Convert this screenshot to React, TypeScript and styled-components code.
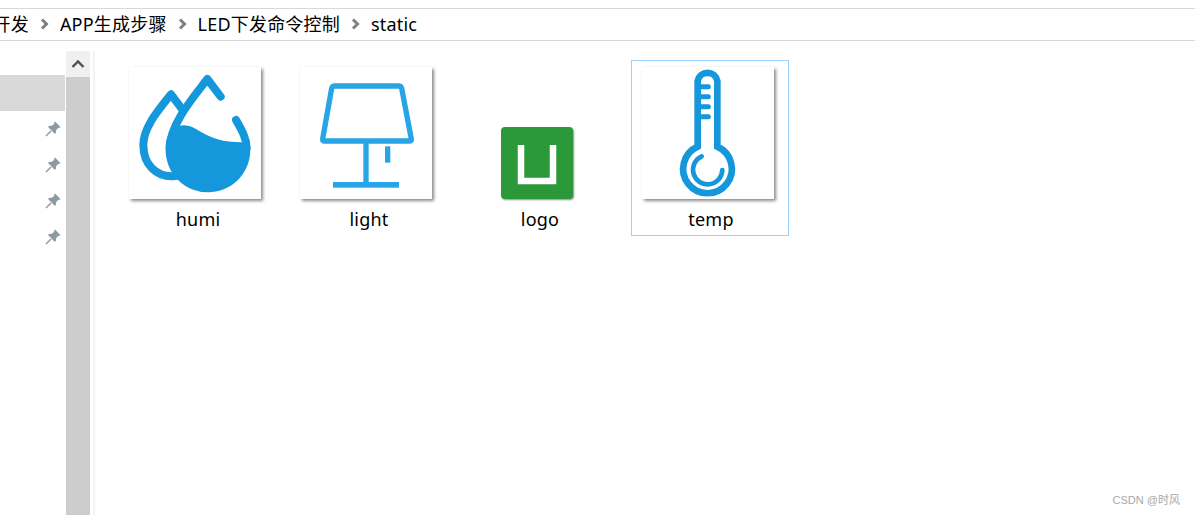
import styled, { createGlobalStyle } from "styled-components";

const GlobalStyle = createGlobalStyle`
  html, body {
    margin: 0;
    height: 100%;
    background: #fff;
    overflow: hidden;
  }
`;

const Page = styled.div`
  height: 515px;
  padding-top: 8px;
  box-sizing: border-box;
  display: flex;
  flex-direction: column;
  position: relative;
  overflow: hidden;
  font-family: "Noto Sans", "Noto Sans CJK SC", sans-serif;
  color: #000;
`;

const Breadcrumb = styled.div`
  height: 30px;
  padding-bottom: 1px;
  flex: none;
  display: flex;
  align-items: center;
  gap: 10.5px;
  margin-left: -7.5px;
  border-top: 1px solid #d9d9d9;
  border-bottom: 1px solid #d9d9d9;
  font-size: 18px;
  letter-spacing: 0.2px;
  white-space: nowrap;
`;

const Crumb = styled.span`
  line-height: 30px;
`;

const Main = styled.div`
  flex: 1;
  display: flex;
  padding-top: 10px;
  min-height: 0;
`;

const Sidebar = styled.div`
  width: 65px;
  margin-right: 1px;
  padding-top: 24px;
  flex: none;
`;

const NavRow = styled.div<{ $active?: boolean }>`
  height: 36px;
  display: flex;
  align-items: center;
  justify-content: flex-end;
  padding-right: 4px;
  box-sizing: border-box;
  background: ${(p) => (p.$active ? "#d9d9d9" : "transparent")};
`;

const Scrollbar = styled.div`
  width: 24px;
  flex: none;
  display: flex;
  flex-direction: column;
  background: #cdcdcd;
`;

const ScrollUp = styled.div`
  height: 26px;
  background: #f0f0f0;
  display: flex;
  align-items: center;
  justify-content: center;
`;

const Files = styled.div`
  flex: 1;
  margin-left: 3px;
  border-left: 2px solid #f3f3f3;
  padding: 9px 0 0 23px;
  display: flex;
  align-items: flex-start;
  gap: 13px;
`;

const Cell = styled.div<{ $selected?: boolean }>`
  width: 158px;
  height: 176px;
  box-sizing: border-box;
  border: 1px solid ${(p) => (p.$selected ? "#99d1ff" : "transparent")};
  padding: 6px 0 0 10px;
  display: flex;
  flex-direction: column;
`;

const ThumbArea = styled.div`
  width: 132px;
  height: 132px;
  display: flex;
  align-items: flex-end;
  justify-content: center;
`;

const Thumb = styled.div`
  width: 132px;
  height: 132px;
  background: #fff;
  box-shadow: 2px 2px 3px rgba(0, 0, 0, 0.45), 0 0 1px rgba(0, 0, 0, 0.08);

  svg {
    display: block;
  }
`;

const LogoThumb = styled.div`
  width: 72px;
  height: 72px;
  border-radius: 4px;
  background: #2b9939;
  box-shadow: 1px 1px 2px rgba(0, 0, 0, 0.45);

  svg {
    display: block;
  }
`;

const Label = styled.div`
  margin: 7px 0 0 -10px;
  width: 158px;
  text-align: center;
  font-size: 18px;
  letter-spacing: 0.2px;
  line-height: 26px;
`;

const Watermark = styled.div`
  position: absolute;
  right: 15px;
  bottom: 7px;
  font-size: 11px;
  line-height: 16px;
  color: #a8a8a8;
  font-family: "Liberation Sans", "Noto Sans CJK SC", sans-serif;
`;

function Chevron() {
  return (
    <svg width="10" height="12" viewBox="0 0 10 12">
      <path d="M3 1.5 L7.5 6 L3 10.5" fill="none" stroke="#808080" strokeWidth="3" />
    </svg>
  );
}

function PinIcon() {
  return (
    <svg width="16" height="16" viewBox="0 0 16 16">
      <path d="M10 0.5 L15.5 6 L14.2 7 L13.2 6.7 L11 9.6 C11.4 11 10.8 12.2 10 13 L3 6 C3.8 5.2 5 4.6 6.4 5 L9.3 2.8 L9 1.8 Z" fill="#8e9aa3" />
      <path d="M6 10 L1 15" stroke="#8e9aa3" strokeWidth="1.5" />
    </svg>
  );
}

function HumiIcon() {
  return (
    <svg width="132" height="132" viewBox="27 36 396 396">
      <g fill="none" stroke="#1597dc" strokeWidth="24" strokeLinecap="round" strokeLinejoin="round">
        <path d="M186 162 L153 118 C120 160 70 215 70 270 C70 330 110 366 160 364 L180 361" />
        <path d="M302 125 L262 72 C230 115 149 205 149 280" />
        <path d="M348 195 C365 225 380 250 380 280" />
      </g>
      <path
        d="M137 280 C137 240 155 212 190 211 C240 211 250 262 365 262 L390 270 A127 127 0 1 1 137 280 Z"
        fill="#1597dc"
      />
    </svg>
  );
}

function LightIcon() {
  return (
    <svg width="132" height="132" viewBox="540 36 396 396">
      <g fill="#27a5e6">
        <rect x="730" y="262" width="16" height="122" />
        <rect x="639" y="381" width="198" height="17" />
        <rect x="795" y="274" width="16" height="49" />
      </g>
      <path
        d="M644 93 H836 Q843 93 845 100 L874 252 Q875 258 868 258 H614 Q607 258 608 252 L635 100 Q637 93 644 93 Z"
        fill="none"
        stroke="#27a5e6"
        strokeWidth="16"
        strokeLinejoin="round"
      />
    </svg>
  );
}

function LogoIcon() {
  return (
    <svg width="72" height="72" viewBox="0 0 72 72">
      <path d="M20 18 V54 H52 V18" fill="none" stroke="#fff" strokeWidth="6.5" />
    </svg>
  );
}

function TempIcon() {
  return (
    <svg width="132" height="132" viewBox="486 36 396 396">
      <g fill="none" stroke="#1597dc" strokeLinecap="round">
        <path d="M653 275 A73 73 0 1 0 712 275 L712 78 A30 30 0 0 0 653 78 Z" strokeWidth="20" />
        <path d="M655 95 H685 M655 125 H685 M655 155 H685 M655 185 H685" strokeWidth="15" />
        <path d="M665 304 A44 44 0 1 0 727 345" strokeWidth="14" />
      </g>
    </svg>
  );
}

export default function App() {
  return (
    <Page>
      <GlobalStyle />
      <Breadcrumb>
        <Crumb>开发</Crumb>
        <Chevron />
        <Crumb>APP生成步骤</Crumb>
        <Chevron />
        <Crumb>LED下发命令控制</Crumb>
        <Chevron />
        <Crumb>static</Crumb>
      </Breadcrumb>
      <Main>
        <Sidebar>
          <NavRow $active />
          {[0, 1, 2, 3].map((i) => (
            <NavRow key={i}>
              <PinIcon />
            </NavRow>
          ))}
        </Sidebar>
        <Scrollbar>
          <ScrollUp>
            <svg width="14" height="10" viewBox="0 0 14 10">
              <path d="M1.5 8 L7 2.5 L12.5 8" fill="none" stroke="#505050" strokeWidth="2.4" />
            </svg>
          </ScrollUp>
        </Scrollbar>
        <Files>
          <Cell>
            <ThumbArea>
              <Thumb>
                <HumiIcon />
              </Thumb>
            </ThumbArea>
            <Label>humi</Label>
          </Cell>
          <Cell>
            <ThumbArea>
              <Thumb>
                <LightIcon />
              </Thumb>
            </ThumbArea>
            <Label>light</Label>
          </Cell>
          <Cell>
            <ThumbArea>
              <LogoThumb>
                <LogoIcon />
              </LogoThumb>
            </ThumbArea>
            <Label>logo</Label>
          </Cell>
          <Cell $selected>
            <ThumbArea>
              <Thumb>
                <TempIcon />
              </Thumb>
            </ThumbArea>
            <Label>temp</Label>
          </Cell>
        </Files>
      </Main>
      <Watermark>CSDN @时风</Watermark>
    </Page>
  );
}
